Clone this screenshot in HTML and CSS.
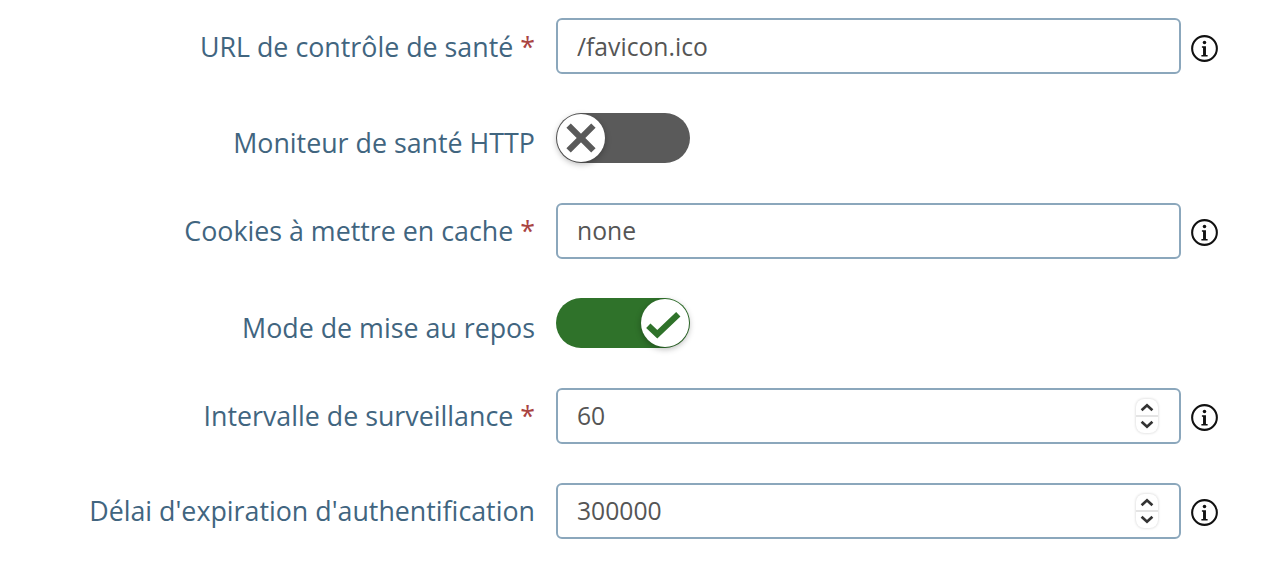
FILE: index.html
```html
<!DOCTYPE html>
<html lang="fr">
<head>
    <meta charset="UTF-8">
    <meta name="viewport" content="width=device-width, initial-scale=1.0">
    <title>Paramètres</title>
    <link rel="stylesheet" href="styles.css">
</head>
<body>

    <form class="settings">
        <div class="row">
            <label class="label">URL de contrôle de santé <span class="req">*</span></label>
            <div class="field"><input class="text" type="text" value="/favicon.ico"></div>
            <svg class="info" viewBox="0 0 26 26"><circle cx="13" cy="13" r="11.9"/><circle class="dot" cx="13" cy="7.3" r="1.7"/><path class="stem" d="M10.5 10.8h3.9v8.5h1.6v1.5h-6v-1.5h1.6v-7h-1.1z"/></svg>
        </div>

        <div class="row">
            <label class="label label-toggle">Moniteur de santé HTTP</label>
            <div class="toggle off">
                <span class="knob">
                    <svg viewBox="0 0 40 40"><path d="M7.6 7.6l24.8 24.8M32.4 7.6L7.6 32.4"/></svg>
                </span>
            </div>
        </div>

        <div class="row">
            <label class="label">Cookies à mettre en cache <span class="req">*</span></label>
            <div class="field"><input class="text" type="text" value="none"></div>
            <svg class="info" viewBox="0 0 26 26"><circle cx="13" cy="13" r="11.9"/><circle class="dot" cx="13" cy="7.3" r="1.7"/><path class="stem" d="M10.5 10.8h3.9v8.5h1.6v1.5h-6v-1.5h1.6v-7h-1.1z"/></svg>
        </div>

        <div class="row">
            <label class="label label-toggle">Mode de mise au repos</label>
            <div class="toggle on">
                <span class="knob">
                    <svg viewBox="0 0 40 40"><path d="M3.3 22.7l9 8.6 21-20"/></svg>
                </span>
            </div>
        </div>

        <div class="row">
            <label class="label">Intervalle de surveillance <span class="req">*</span></label>
            <div class="field">
                <input class="text" type="text" value="60">
                <span class="spin">
                    <svg viewBox="0 0 12 8"><path d="M1.2 6.4L6 2l4.8 4.4"/></svg>
                    <svg viewBox="0 0 12 8"><path d="M1.2 1.6L6 6l4.8-4.4"/></svg>
                </span>
            </div>
            <svg class="info" viewBox="0 0 26 26"><circle cx="13" cy="13" r="11.9"/><circle class="dot" cx="13" cy="7.3" r="1.7"/><path class="stem" d="M10.5 10.8h3.9v8.5h1.6v1.5h-6v-1.5h1.6v-7h-1.1z"/></svg>
        </div>

        <div class="row">
            <label class="label">Délai d'expiration d'authentification</label>
            <div class="field">
                <input class="text" type="text" value="300000">
                <span class="spin">
                    <svg viewBox="0 0 12 8"><path d="M1.2 6.4L6 2l4.8 4.4"/></svg>
                    <svg viewBox="0 0 12 8"><path d="M1.2 1.6L6 6l4.8-4.4"/></svg>
                </span>
            </div>
            <svg class="info" viewBox="0 0 26 26"><circle cx="13" cy="13" r="11.9"/><circle class="dot" cx="13" cy="7.3" r="1.7"/><path class="stem" d="M10.5 10.8h3.9v8.5h1.6v1.5h-6v-1.5h1.6v-7h-1.1z"/></svg>
        </div>
    </form>

</body>
</html>
```

FILE: styles.css
```css
body {
    margin: 0;
    background: #fff;
    font-family: "Open Sans", sans-serif;
    font-size: 26.8px;
    overflow: hidden;
}

.settings {
    display: flex;
    flex-direction: column;
    gap: 39.4px;
    padding-top: 18px;
}

.row {
    display: flex;
    align-items: center;
}

.label {
    width: 535px;
    flex: none;
    text-align: right;
    color: #41657f;
    white-space: nowrap;
}

.label-toggle {
    padding-top: 8px;
}

.req {
    color: #a94442;
}

.field {
    position: relative;
    width: 625.5px;
    height: 56px;
    margin-left: 20.5px;
    margin-right: 9.5px;
}

.text {
    display: block;
    box-sizing: border-box;
    width: 100%;
    height: 100%;
    padding: 0 19.5px;
    border: 2px solid #8ba7bc;
    border-radius: 6px;
    outline: none;
    font-family: inherit;
    font-size: 24.7px;
    color: #555;
    background: #fff;
}

.info {
    width: 27px;
    height: 27px;
    flex: none;
    margin-top: 4px;
}

.info circle {
    fill: none;
    stroke: #111;
    stroke-width: 2;
}

.info .dot {
    fill: #111;
    stroke: none;
}

.info .stem {
    fill: #111;
}

.toggle {
    box-sizing: border-box;
    display: flex;
    width: 134.5px;
    height: 50px;
    margin-left: 20.5px;
    border-radius: 25px;
    padding: 1px;
}

.toggle.off {
    background: #5a5a5a;
}

.toggle.on {
    background: #2f722a;
    justify-content: flex-end;
}

.knob {
    box-sizing: border-box;
    display: flex;
    align-items: center;
    justify-content: center;
    width: 48px;
    height: 48px;
    border-radius: 50%;
    background: #fff;
    box-shadow: 0 2px 6px rgba(0, 0, 0, 0.3);
}

.knob svg {
    width: 40px;
    height: 40px;
    fill: none;
    stroke-width: 6.2;
}

.off .knob svg {
    stroke: #5a5a5a;
}

.on .knob svg {
    stroke: #2f722a;
}

.spin {
    position: absolute;
    top: 11px;
    right: 23px;
    display: flex;
    flex-direction: column;
    align-items: center;
    justify-content: space-between;
    box-sizing: border-box;
    width: 22px;
    height: 34px;
    padding: 4px 0;
    border-radius: 8px;
    background: linear-gradient(#e4e4e4, #e4e4e4) center / 100% 2px no-repeat, #fff;
    box-shadow: 0 0 3px rgba(0, 0, 0, 0.2);
}

.spin svg {
    width: 14px;
    height: 9px;
    fill: none;
    stroke: #333;
    stroke-width: 2.4;
}
```
